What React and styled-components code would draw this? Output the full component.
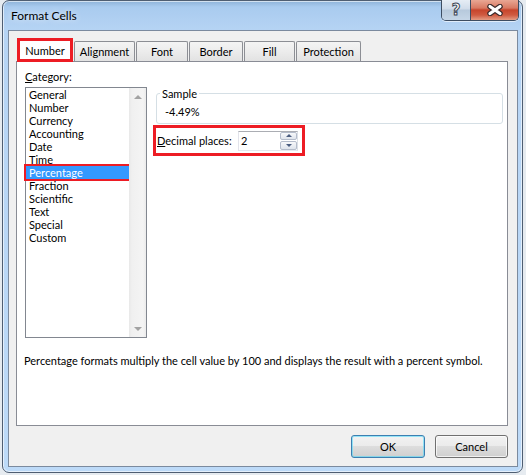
import React from 'react';
import styled, { createGlobalStyle } from 'styled-components';

const GlobalStyle = createGlobalStyle`
  html, body {
    margin: 0;
    padding: 0;
  }
  body {
    width: 526px;
    height: 475px;
    overflow: hidden;
    background: #e6ebf0;
    font-family: Lato, "Liberation Sans", sans-serif;
    font-size: 11px;
    color: #000;
  }
`;

const Window = styled.div`
  box-sizing: border-box;
  width: 521px;
  height: 473px;
  margin-left: 2px;
  border: 1px solid #4f5e72;
  border-radius: 7px;
  background: linear-gradient(to bottom, #8db2d8 0, #a9cbef 6px, #b6d4f4 30px, #bddaf8 100%);
  box-shadow: inset 0 0 0 1px rgba(255, 255, 255, 0.6);
  display: flex;
  flex-direction: column;
  padding: 0 4px 5px 5px;
`;

const TitleBar = styled.div`
  height: 29px;
  display: flex;
  align-items: center;
  justify-content: space-between;
`;

const Title = styled.div`
  padding-left: 3px;
  font-size: 12px;
  color: #000;
  text-shadow: 0 0 6px rgba(255, 255, 255, 0.9);
`;

const Caption = styled.div`
  align-self: flex-start;
  margin-top: -1px;
  margin-right: -1px;
  display: flex;
  border: 1px solid #3d4d62;
  border-top: none;
  border-radius: 0 0 5px 5px;
  overflow: hidden;
  box-shadow: 0 1px 0 rgba(255, 255, 255, 0.6);
`;

const CaptionButton = styled.div`
  width: ${p => p.$w}px;
  height: 20px;
  display: flex;
  align-items: center;
  justify-content: center;
  background: ${p => p.$close
    ? 'linear-gradient(to bottom, #e9a794 0%, #d97a63 40%, #c7452c 50%, #cf5a40 75%, #e49c84 100%)'
    : 'linear-gradient(to bottom, #e6edf5 0%, #d0dcea 45%, #b7c9dc 50%, #c6d6e7 100%)'};
  & + & {
    border-left: 1px solid #3d4d62;
  }
`;

const HelpGlyph = styled.span`
  font-family: "DejaVu Sans", sans-serif;
  font-weight: bold;
  font-size: 15px;
  color: #fff;
  -webkit-text-stroke: 1px #3b4656;
  line-height: 1;
`;

const Content = styled.div`
  flex: 1;
  box-sizing: border-box;
  border: 1px solid #7b8a9e;
  background: #f0f0f0;
  padding: 7px 9px 0 7px;
  display: flex;
  flex-direction: column;
`;

const TabRow = styled.div`
  height: 23px;
  display: flex;
  align-items: flex-end;
  gap: 1px;
  padding-left: 1px;
`;

const Tab = styled.div`
  box-sizing: border-box;
  width: ${p => p.$w}px;
  height: 20px;
  display: flex;
  align-items: center;
  justify-content: center;
  border: 1px solid #8c8e94;
  border-bottom: none;
  border-radius: 2px 2px 0 0;
  background: linear-gradient(to bottom, #f4f4f4 0%, #ececec 50%, #e2e2e2 100%);
`;

const ActiveTab = styled(Tab)`
  position: relative;
  z-index: 1;
  height: 24px;
  margin-bottom: -1px;
  padding-top: 1px;
  border: 3px solid #ed1c24;
  border-radius: 0;
  background: #fff;
`;

const Panel = styled.div`
  box-sizing: border-box;
  height: 365px;
  border: 1px solid #898c95;
  background: #fff;
  padding: 7px 4px 0 8px;
  display: flex;
  flex-direction: column;
`;

const PanelTop = styled.div`
  display: flex;
  gap: 6px;
`;

const LeftCol = styled.div`
  width: 122px;
  display: flex;
  flex-direction: column;
`;

const FieldLabel = styled.div`
  line-height: 15px;
  margin-bottom: 3px;
`;

const ListBox = styled.div`
  box-sizing: border-box;
  height: 251px;
  border: 1px solid #828790;
  display: flex;
`;

const Items = styled.div`
  flex: 1;
  display: flex;
  flex-direction: column;
`;

const Item = styled.div`
  height: 13px;
  line-height: 13px;
  padding-left: 3px;
  white-space: nowrap;
  ${p => p.$selected && `
    background: #3399ff;
    color: #fff;
    outline: 2px solid #ed1c24;
  `}
`;

const ScrollBar = styled.div`
  width: 17px;
  background: linear-gradient(to right, #e8e8e8 0, #f0f0f0 3px, #f4f4f4 14px, #ebebeb 100%);
  display: flex;
  flex-direction: column;
  justify-content: space-between;
`;

const Arrow = styled.div`
  height: 17px;
  display: flex;
  align-items: center;
  justify-content: center;
  &::before {
    content: '';
    border-left: 4px solid transparent;
    border-right: 4px solid transparent;
    ${p => p.$down
      ? 'border-top: 4px solid #a2a2a2;'
      : 'border-bottom: 4px solid #a2a2a2;'}
  }
`;

const RightCol = styled.div`
  flex: 1;
  margin-top: 18px;
  display: flex;
  flex-direction: column;
`;

const SampleBox = styled.fieldset`
  box-sizing: border-box;
  height: 37px;
  margin: 0 0 0 3px;
  padding: 0 8px;
  border: 1px solid #d5dfe5;
  border-radius: 3px;
`;

const Legend = styled.legend`
  padding: 0 2px;
  margin-left: -5px;
  line-height: 13px;
`;

const SampleValue = styled.div`
  margin-top: 4px;
  line-height: 15px;
`;

const Highlight = styled.div`
  box-sizing: border-box;
  width: 152px;
  height: 31px;
  margin-top: 1px;
  border: 3px solid #ed1c24;
  display: flex;
  align-items: center;
  justify-content: space-between;
  padding: 0 4px 0 1px;
`;

const HighlightLabel = styled.span`
  white-space: nowrap;
`;

const Spinner = styled.div`
  box-sizing: border-box;
  width: 60px;
  height: 20px;
  border: 1px solid;
  border-color: #abadb3 #dbdfe6 #e3e9ef #e2e3ea;
  display: flex;
  align-items: center;
`;

const SpinValue = styled.span`
  flex: 1;
  padding-left: 2px;
`;

const SpinButtons = styled.div`
  width: 17px;
  height: 18px;
  display: flex;
  flex-direction: column;
  gap: 1px;
`;

const SpinButton = styled.div`
  box-sizing: border-box;
  flex: 1;
  border: 1px solid #b4bccb;
  border-radius: 2px;
  background: linear-gradient(to bottom, #f7f8fa, #dfe4ec);
  display: flex;
  align-items: center;
  justify-content: center;
  &::before {
    content: '';
    border-left: 3px solid transparent;
    border-right: 3px solid transparent;
    ${p => p.$down
      ? 'border-top: 3px solid #4a5d80;'
      : 'border-bottom: 3px solid #4a5d80;'}
  }
`;

const Description = styled.div`
  margin-top: 15px;
  margin-left: -1px;
  line-height: 15px;
  white-space: nowrap;
`;

const ButtonRow = styled.div`
  margin-top: 9px;
  display: flex;
  justify-content: flex-end;
  gap: 10px;
`;

const DialogButton = styled.div`
  box-sizing: border-box;
  width: ${p => p.$w}px;
  height: 23px;
  display: flex;
  align-items: center;
  justify-content: center;
  border: 1px solid ${p => (p.$default ? '#3c7fb1' : '#707070')};
  border-radius: 3px;
  background: linear-gradient(to bottom, #f2f2f2 0%, #ebebeb 49%, #dddddd 50%, #cfcfcf 100%);
  box-shadow: inset 0 0 0 1px ${p => (p.$default ? 'rgba(72, 216, 251, 0.55)' : 'rgba(255, 255, 255, 0.7)')};
`;

const tabs = [
  { label: 'Alignment', w: 61 },
  { label: 'Font', w: 52 },
  { label: 'Border', w: 54 },
  { label: 'Fill', w: 51 },
  { label: 'Protection', w: 65 },
];

const categories = [
  'General', 'Number', 'Currency', 'Accounting', 'Date', 'Time',
  'Percentage', 'Fraction', 'Scientific', 'Text', 'Special', 'Custom',
];

const CloseIcon = () => (
  <svg width="18" height="12" viewBox="0 0 18 12">
    <path d="M4 2.5 L14 9.5 M14 2.5 L4 9.5" stroke="#3a2a2a" strokeWidth="5.5" strokeLinecap="round" />
    <path d="M4 2.5 L14 9.5 M14 2.5 L4 9.5" stroke="#fff" strokeWidth="3.2" strokeLinecap="round" />
  </svg>
);

export default function App() {
  return (
    <>
      <GlobalStyle />
      <Window>
        <TitleBar>
          <Title>Format Cells</Title>
          <Caption>
            <CaptionButton $w={28}>
              <HelpGlyph>?</HelpGlyph>
            </CaptionButton>
            <CaptionButton $w={47} $close>
              <CloseIcon />
            </CaptionButton>
          </Caption>
        </TitleBar>
        <Content>
          <TabRow>
            <ActiveTab $w={56}>Number</ActiveTab>
            {tabs.map(t => (
              <Tab key={t.label} $w={t.w}>{t.label}</Tab>
            ))}
          </TabRow>
          <Panel>
            <PanelTop>
              <LeftCol>
                <FieldLabel><u>C</u>ategory:</FieldLabel>
                <ListBox>
                  <Items>
                    {categories.map(c => (
                      <Item key={c} $selected={c === 'Percentage'}>{c}</Item>
                    ))}
                  </Items>
                  <ScrollBar>
                    <Arrow />
                    <Arrow $down />
                  </ScrollBar>
                </ListBox>
              </LeftCol>
              <RightCol>
                <SampleBox>
                  <Legend>Sample</Legend>
                  <SampleValue>-4.49%</SampleValue>
                </SampleBox>
                <Highlight>
                  <HighlightLabel><u>D</u>ecimal places:</HighlightLabel>
                  <Spinner>
                    <SpinValue>2</SpinValue>
                    <SpinButtons>
                      <SpinButton />
                      <SpinButton $down />
                    </SpinButtons>
                  </Spinner>
                </Highlight>
              </RightCol>
            </PanelTop>
            <Description>
              Percentage formats multiply the cell value by 100 and displays the result with a percent symbol.
            </Description>
          </Panel>
          <ButtonRow>
            <DialogButton $w={74} $default>OK</DialogButton>
            <DialogButton $w={73}>Cancel</DialogButton>
          </ButtonRow>
        </Content>
      </Window>
    </>
  );
}
